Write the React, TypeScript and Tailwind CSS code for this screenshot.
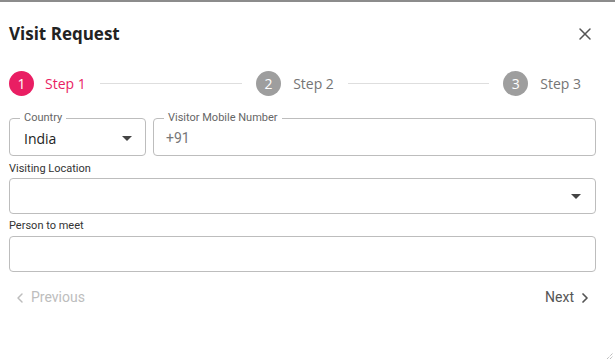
import { ChevronLeft, ChevronRight, X } from 'lucide-react';

const steps = ['Step 1', 'Step 2', 'Step 3'];

function Caret() {
  return (
    <svg width="10" height="5" viewBox="0 0 10 5" className="shrink-0">
      <path d="M0 0 L10 0 L5 5 Z" fill="#444" />
    </svg>
  );
}

function Stepper() {
  return (
    <div className="flex items-center h-[26px]">
      {steps.map((label, i) => (
        <div key={label} className={i < steps.length - 1 ? 'flex items-center flex-1' : 'flex items-center'}>
          <div
            className={
              i === 0
                ? 'w-[25px] h-[25px] rounded-full bg-[#e91e63] text-white flex items-center justify-center text-[14px]'
                : 'w-[25px] h-[25px] rounded-full bg-[#9e9e9e] text-white flex items-center justify-center text-[14px]'
            }
          >
            {i + 1}
          </div>
          <span className={i === 0 ? 'ml-[11px] text-[14px] text-[#e91e63]' : 'ml-[12px] text-[14px] text-[#757575]'}>
            {label}
          </span>
          {i < steps.length - 1 && <div className="flex-1 h-px bg-[#dedede] ml-[14px] mr-[14px]" />}
        </div>
      ))}
    </div>
  );
}

export default function App() {
  return (
    <div className="w-[615px] h-[361px] bg-white relative overflow-hidden font-['Open_Sans',sans-serif]">
      <div className="h-[2px] bg-[#8c8c8c]" />
      <div className="pl-[9px] pr-[19px] pt-[19px]">
        {/* header */}
        <div className="flex items-center justify-between">
          <h2 className="text-[17px] leading-[26px] font-bold text-[#222]">Visit Request</h2>
          <X size={20} strokeWidth={1.8} className="text-[#555] mr-[1px]" />
        </div>

        <div className="mt-[23px] mr-[15px]">
          <Stepper />
        </div>

        {/* country + mobile */}
        <div className="flex gap-[7px] mt-[22px]">
          <fieldset className="w-[137px] h-[44px] border border-[#bdbdbd] rounded-[4px] px-[9px] -mt-[6px]">
            <legend className="px-[4px] ml-[1px] text-[11px] leading-[12px] text-[#666] font-['Roboto',sans-serif]">
              Country
            </legend>
            <div className="flex items-center justify-between h-[29px] pl-[5px] pr-[4px]">
              <span className="text-[14px] text-[#222]">India</span>
              <Caret />
            </div>
          </fieldset>
          <fieldset className="flex-1 h-[44px] border border-[#bdbdbd] rounded-[4px] px-[9px] -mt-[6px]">
            <legend className="px-[4px] ml-[1px] text-[11px] leading-[12px] text-[#666] font-['Roboto',sans-serif]">
              Visitor Mobile Number
            </legend>
            <div className="flex items-center h-[29px] pl-[3px]">
              <span className="text-[14px] text-[#777] font-['Roboto',sans-serif]">+91</span>
            </div>
          </fieldset>
        </div>

        {/* visiting location */}
        <div className="mt-[6px] text-[11px] leading-[14px] text-[#333] font-['Roboto',sans-serif]">Visiting Location</div>
        <div className="mt-[2px] h-[36px] border border-[#bdbdbd] rounded-[4px] flex items-center justify-end pr-[14px]">
          <Caret />
        </div>

        {/* person to meet */}
        <div className="mt-[5px] text-[11px] leading-[14px] text-[#333] font-['Roboto',sans-serif]">Person to meet</div>
        <div className="mt-[3px] h-[36px] border border-[#bdbdbd] rounded-[4px]" />

        {/* footer */}
        <div className="flex items-center justify-between mt-[15px] font-['Roboto',sans-serif] text-[14px]">
          <div className="flex items-center text-[#bdbdbd] ml-[3px]">
            <ChevronLeft size={16} strokeWidth={2.2} />
            <span className="ml-[3px]">Previous</span>
          </div>
          <div className="flex items-center text-[#555] mr-[3px]">
            <span className="mr-[3px]">Next</span>
            <ChevronRight size={16} strokeWidth={2.6} />
          </div>
        </div>
      </div>

      {/* resize grip */}
      <svg width="8" height="8" viewBox="0 0 8 8" className="absolute right-[1px] bottom-[1px]">
        <path d="M1 7 L7 1 M4 7 L7 4" stroke="#888" strokeWidth="0.8" strokeDasharray="1 1" />
      </svg>
    </div>
  );
}
